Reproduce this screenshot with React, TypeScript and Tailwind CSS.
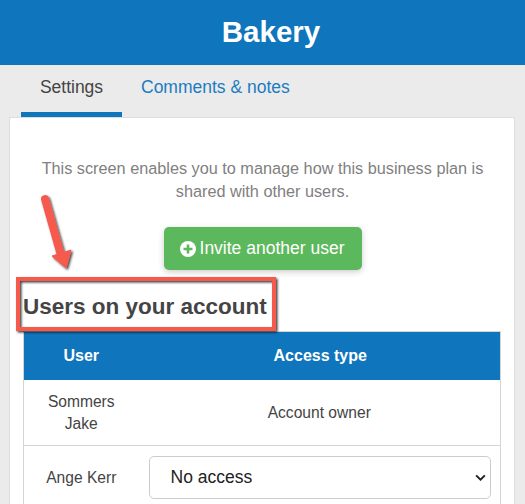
export default function App() {
  return (
    <div className="relative h-[504px] w-[525px] overflow-hidden bg-[#ebebeb] font-['Liberation_Sans',Arial,sans-serif] text-[#444]">
      <header className="flex h-[65px] items-center justify-center bg-[#0f75bc] pl-[17px]">
        <h1 className="text-[29.5px] font-bold text-white">Bakery</h1>
      </header>

      {/* Tabs */}
      <nav className="flex h-[52px] pl-[21px] text-[17.5px]">
        <div className="flex h-full w-[101px] items-center justify-center border-b-[5px] border-[#0f75bc] pb-[3px]">
          Settings
        </div>
        <div className="flex h-full items-center pb-[8px] pl-[19px] text-[#1b7cc1]">Comments &amp; notes</div>
      </nav>

      {/* Panel */}
      <main className="mx-[9px] h-[400px] w-[506px] border border-[#dedede] bg-white px-[13px] pt-[39px]">
        <p className="pl-[1px] text-center text-[16.25px] leading-[23px] text-[#808080]">
          This screen enables you to manage how this business plan is shared with other users.
        </p>
        <div className="mt-[24px] flex justify-center pl-[2px]">
          <button className="flex h-[43px] w-[198px] items-center justify-center gap-[4px] rounded-[5px] bg-[#5cb85c] pr-[2px] text-[17.5px] text-white shadow-[0_2px_6px_rgba(0,0,0,0.2)]">
            <svg viewBox="0 0 16 16" className="h-[16px] w-[16px]">
              <circle cx="8" cy="8" r="8" fill="white" />
              <path d="M8 3.5v9M3.5 8h9" stroke="#5cb85c" strokeWidth="2.6" />
            </svg>
            Invite another user
          </button>
        </div>
        <h2 className="mt-[22px] h-[39px] text-[22.5px] leading-[30px] font-bold">Users on your account</h2>

        <table className="w-[478px] table-fixed border border-[#d5d5d5] text-center text-[15.6px]">
          <thead>
            <tr className="h-[48px] bg-[#0f75bc] text-[16px] font-bold text-white">
              <th className="w-[115px]">User</th>
              <th className="pl-[2px]">Access type</th>
            </tr>
          </thead>
          <tbody>
            <tr className="h-[66px] border-b border-[#d5d5d5]">
              <td className="pt-[1px] leading-[22px]">
                Sommers
                <br />
                Jake
              </td>
              <td>Account owner</td>
            </tr>
            <tr>
              <td>Ange Kerr</td>
              <td className="pt-[10px] pr-[9px] pb-[10px] pl-[10px]">
                <div className="flex h-[43px] items-center justify-between rounded-[5px] border border-[#ccc] pr-[4px] pl-[21px] text-left text-[17.5px] text-[#222]">
                  No access
                  <svg viewBox="0 0 12 8" className="h-[7px] w-[11px]">
                    <path d="M1 1.5l5 5 5-5" fill="none" stroke="#222" strokeWidth="2.2" />
                  </svg>
                </div>
              </td>
            </tr>
          </tbody>
        </table>
      </main>

      {/* Annotation drawn over the page */}
      <svg className="absolute top-0 left-0 h-[504px] w-[525px]" viewBox="0 0 525 504">
        <defs>
          <filter id="shade" x="-20%" y="-20%" width="140%" height="140%">
            <feDropShadow dx="1.5" dy="1.5" stdDeviation="1" floodColor="#000" floodOpacity="0.75" />
          </filter>
        </defs>
        <g filter="url(#shade)">
          <rect x="18" y="279" width="256" height="50" fill="none" stroke="#f55a4e" strokeWidth="4" />
          <path d="M45 199L60 252" stroke="#f55a4e" strokeWidth="8" strokeLinecap="round" fill="none" />
          <path d="M52 256L71 250L66 268Z" fill="#f55a4e" stroke="#f55a4e" strokeWidth="1" strokeLinejoin="round" />
        </g>
      </svg>
    </div>
  );
}
